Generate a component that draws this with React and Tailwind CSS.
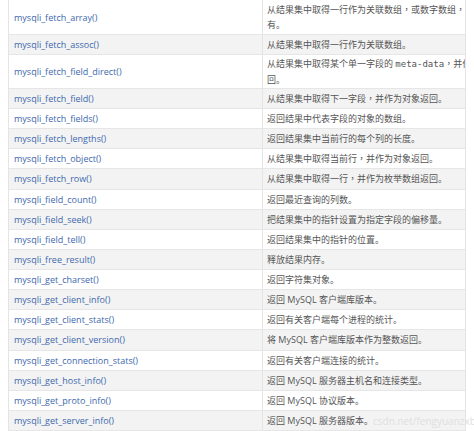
import React from "react";

const rows = [
  ["mysqli_fetch_array()", ["从结果集中取得一行作为关联数组，或数字数组，或两者兼", "有。"], "h-[35px]"],
  ["mysqli_fetch_assoc()", ["从结果集中取得一行作为关联数组。"], "h-[20px]"],
  ["mysqli_fetch_field_direct()", ["META", "回。"], "h-[34px]"],
  ["mysqli_fetch_field()", ["从结果集中取得下一字段，并作为对象返回。"], "h-[20px]"],
  ["mysqli_fetch_fields()", ["返回结果中代表字段的对象的数组。"], "h-[20.13px]"],
  ["mysqli_fetch_lengths()", ["返回结果集中当前行的每个列的长度。"], "h-[20.13px]"],
  ["mysqli_fetch_object()", ["从结果集中取得当前行，并作为对象返回。"], "h-[20.13px]"],
  ["mysqli_fetch_row()", ["从结果集中取得一行，并作为枚举数组返回。"], "h-[20.13px]"],
  ["mysqli_field_count()", ["返回最近查询的列数。"], "h-[20.13px]"],
  ["mysqli_field_seek()", ["把结果集中的指针设置为指定字段的偏移量。"], "h-[20.13px]"],
  ["mysqli_field_tell()", ["返回结果集中的指针的位置。"], "h-[20.13px]"],
  ["mysqli_free_result()", ["释放结果内存。"], "h-[20.13px]"],
  ["mysqli_get_charset()", ["返回字符集对象。"], "h-[20.13px]"],
  ["mysqli_get_client_info()", ["返回 MySQL 客户端库版本。"], "h-[20.13px]"],
  ["mysqli_get_client_stats()", ["返回有关客户端每个进程的统计。"], "h-[20.13px]"],
  ["mysqli_get_client_version()", ["将 MySQL 客户端库版本作为整数返回。"], "h-[20.13px]"],
  ["mysqli_get_connection_stats()", ["返回有关客户端连接的统计。"], "h-[20.13px]"],
  ["mysqli_get_host_info()", ["返回 MySQL 服务器主机名和连接类型。"], "h-[20.13px]"],
  ["mysqli_get_proto_info()", ["返回 MySQL 协议版本。"], "h-[20.13px]"],
  ["mysqli_get_server_info()", ["返回 MySQL 服务器版本。"], "h-[20.13px]"],
];

function withCommas(text) {
  const parts = text.split("，");
  const out = [];
  parts.forEach((p, i) => {
    out.push(<React.Fragment key={"p" + i}>{p}</React.Fragment>);
    if (i < parts.length - 1) {
      out.push(
        <span key={"c" + i} className="font-['Noto_Sans_CJK_TC',sans-serif]">
          ，
        </span>
      );
    }
  });
  return out;
}

function Desc({ lines }) {
  if (lines[0] === "META") {
    return (
      <>
        <div>
          从结果集中取得某个单一字段的{" "}
          <span className="font-['DejaVu_Sans_Mono',monospace] text-[9px]">meta-data</span>
          {withCommas("，并作为对象返")}
        </div>
        <div>{lines[1]}</div>
      </>
    );
  }
  return lines.map((l, i) => <div key={i}>{withCommas(l)}</div>);
}

export default function App() {
  return (
    <div className="relative w-[474px] h-[431px] overflow-hidden bg-white">
      <div className="ml-[8px] w-[458px] border-l border-r border-[#e4e4e4] overflow-hidden">
        {rows.map(([name, desc, h], i) => (
          <div
            key={i}
            className={`flex box-border border-b border-[#e6e6e6] ${h} ${i % 2 === 1 ? "bg-[#f3f3f3]" : "bg-white"}`}
          >
            <div className="w-[253px] shrink-0 pl-[5px] flex flex-col justify-center text-[9px] leading-[15px] text-[#4069ad] font-['Open_Sans',sans-serif] whitespace-nowrap">
              {name}
            </div>
            <div className="flex-1 min-w-0 border-l border-[#e4e4e4] pl-[4px] flex flex-col justify-center text-[9px] leading-[15px] text-[#555555] font-['Open_Sans','Noto_Sans_CJK_SC',sans-serif] whitespace-nowrap overflow-hidden">
              <Desc lines={desc} />
            </div>
          </div>
        ))}
      </div>
      <div className="absolute left-[373px] top-[414px] text-[10px] leading-[14px] text-[#e0e0e0] font-['Open_Sans',sans-serif] whitespace-nowrap">
        csdn.net/fengyuanzxbe
      </div>
    </div>
  );
}
